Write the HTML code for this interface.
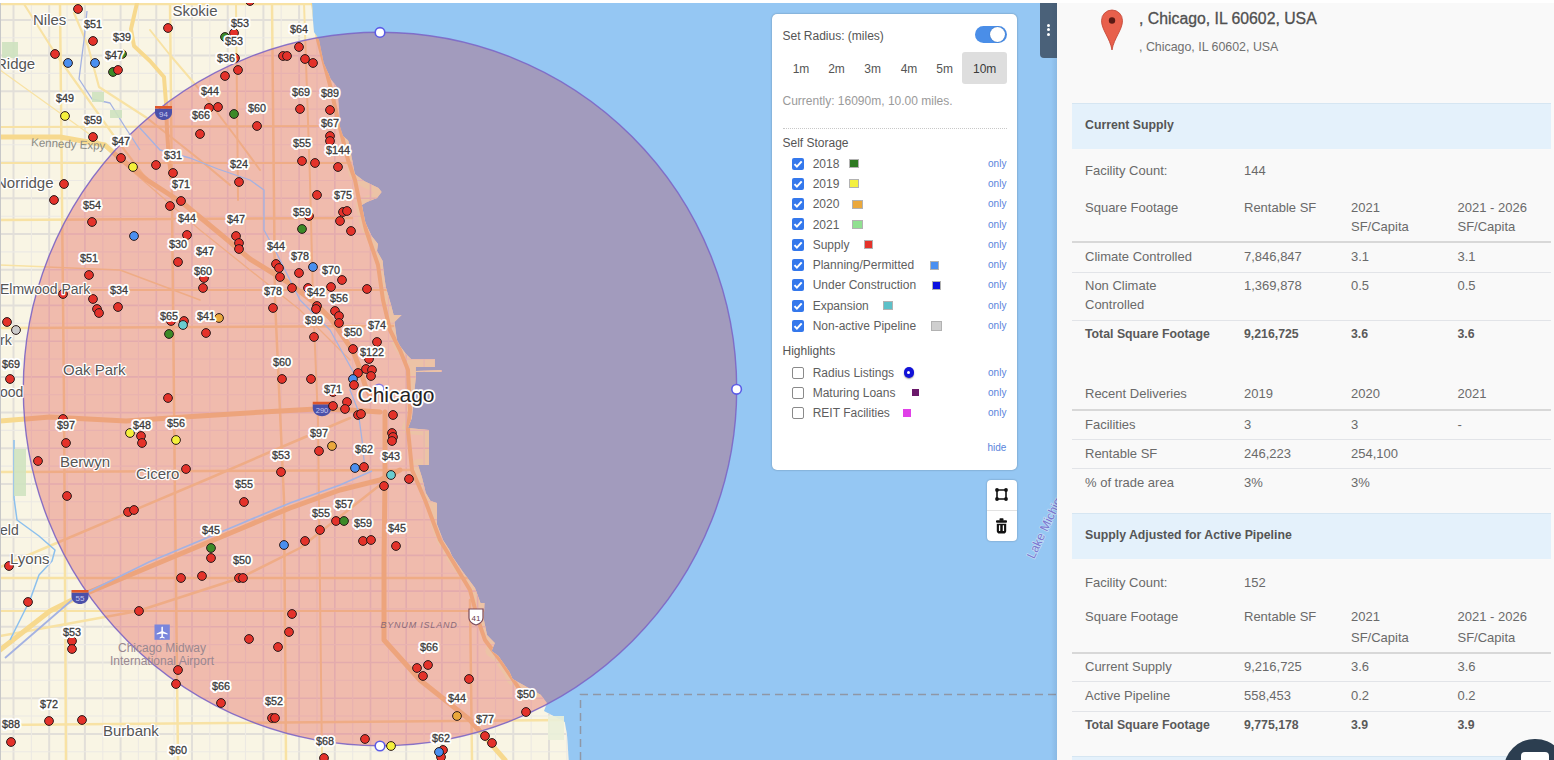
<!DOCTYPE html>
<html><head><meta charset="utf-8"><style>
html,body{margin:0;padding:0;background:#fff;width:1554px;height:760px;overflow:hidden;position:relative;font-family:"Liberation Sans", sans-serif}
.t{position:absolute;white-space:nowrap;font-family:"Liberation Sans", sans-serif}
svg text{font-family:"Liberation Sans", sans-serif}
</style></head><body>
<svg width="1057" height="757" viewBox="0 3 1057 757" style="position:absolute;left:0;top:3">
<defs><clipPath id="land"><polygon points="312,3 312.6,16 314,32 319,40 323.7,63 330.8,79 337,87 338.7,103 339.7,119 339.7,126 343,136 347.6,140 348.4,141 351.6,157 354.8,174 364,181 378.5,188 381.6,192 377,198 367,202 361.9,205 365,221 366,224 371.6,236 378,244 377,251 382.7,261 383.4,270 385.8,287 390.5,303 393.7,315 401.6,315 394.5,322 396.9,340 400,346 406,354 411,359 415.8,359 434.8,359 434.8,367 415.8,367 415.8,371 441.9,370 441.9,372 415.8,372 415.8,378 414,394 411.9,418 408.7,426 408,428 429,430 429,465 418,465 421.9,477 425.8,493 430.6,501 436.9,503 436.9,524 443,540 449.5,550 452,556 463,572 475,588 480.5,603 484.5,603 483.7,619 487,635 494.8,643 491.6,651 498.4,656 509.5,672 512.6,679 541,695 547,703 544,711 564.8,722 567,735 568.7,760 0,760 0,3"/></clipPath>
<clipPath id="circ"><circle cx="380" cy="389" r="356.7"/></clipPath>
<clipPath id="outc"><path clip-rule="evenodd" d="M0 0H1057V760H0Z M23.3 389 a356.7 356.7 0 1 0 713.4 0 a356.7 356.7 0 1 0 -713.4 0Z"/></clipPath></defs>
<rect x="0" y="0" width="1057" height="760" fill="#95c7f3"/>
<g clip-path="url(#outc)">
<polygon points="312,3 312.6,16 314,32 319,40 323.7,63 330.8,79 337,87 338.7,103 339.7,119 339.7,126 343,136 347.6,140 348.4,141 351.6,157 354.8,174 364,181 378.5,188 381.6,192 377,198 367,202 361.9,205 365,221 366,224 371.6,236 378,244 377,251 382.7,261 383.4,270 385.8,287 390.5,303 393.7,315 401.6,315 394.5,322 396.9,340 400,346 406,354 411,359 415.8,359 434.8,359 434.8,367 415.8,367 415.8,371 441.9,370 441.9,372 415.8,372 415.8,378 414,394 411.9,418 408.7,426 408,428 429,430 429,465 418,465 421.9,477 425.8,493 430.6,501 436.9,503 436.9,524 443,540 449.5,550 452,556 463,572 475,588 480.5,603 484.5,603 483.7,619 487,635 494.8,643 491.6,651 498.4,656 509.5,672 512.6,679 541,695 547,703 544,711 564.8,722 567,735 568.7,760 0,760 0,3" fill="#f9f5e4"/>
<g clip-path="url(#land)">
<path d="M13.5 3V760M49.2 3V760M84.9 3V760M120.6 3V760M156.3 3V760M192.0 3V760M227.7 3V760M263.4 3V760M299.1 3V760M334.8 3V760M370.5 3V760M406.2 3V760M441.9 3V760M477.6 3V760M513.3 3V760M549.0 3V760M584.7 3V760M0 19.9H600M0 55.6H600M0 91.2H600M0 126.9H600M0 162.6H600M0 198.3H600M0 234.0H600M0 269.7H600M0 305.4H600M0 341.2H600M0 376.9H600M0 412.6H600M0 448.3H600M0 484.0H600M0 519.7H600M0 555.4H600M0 591.1H600M0 626.8H600M0 662.5H600M0 698.2H600M0 733.9H600" stroke="#e2dfd9" stroke-width="2" fill="none"/><path d="M31.4 3V760M67.1 3V760M102.8 3V760M138.4 3V760M174.1 3V760M209.8 3V760M245.5 3V760M281.2 3V760M317.0 3V760M352.7 3V760M388.4 3V760M424.1 3V760M459.8 3V760M495.5 3V760M531.2 3V760M566.9 3V760M0 37.7H600M0 73.4H600M0 109.1H600M0 144.8H600M0 180.5H600M0 216.2H600M0 251.9H600M0 287.6H600M0 323.3H600M0 359.0H600M0 394.7H600M0 430.4H600M0 466.1H600M0 501.8H600M0 537.5H600M0 573.2H600M0 608.9H600M0 644.6H600M0 680.3H600M0 716.0H600M0 751.7H600" stroke="#ece9e3" stroke-width="1.1" fill="none"/>
<polyline points="60,3 62,200 64,400 66,760" fill="none" stroke="#f8e2a4" stroke-width="2.5" stroke-linejoin="round" stroke-linecap="round"/>
<polyline points="170,3 172,200 175,500 178,760" fill="none" stroke="#f8e2a4" stroke-width="2.5" stroke-linejoin="round" stroke-linecap="round"/>
<polyline points="272,3 275,300 284,500 286,760" fill="none" stroke="#f8e2a4" stroke-width="2.5" stroke-linejoin="round" stroke-linecap="round"/>
<polyline points="304,3 310,180 313,300 318,420 322,760" fill="none" stroke="#f8e2a4" stroke-width="2" stroke-linejoin="round" stroke-linecap="round"/>
<polyline points="470,600 472,760" fill="none" stroke="#f8e2a4" stroke-width="2.5" stroke-linejoin="round" stroke-linecap="round"/>
<polyline points="236,3 238,200" fill="none" stroke="#f8e2a4" stroke-width="2" stroke-linejoin="round" stroke-linecap="round"/>
<polyline points="0,4 312,4" fill="none" stroke="#f8e2a4" stroke-width="2.5" stroke-linejoin="round" stroke-linecap="round"/>
<polyline points="0,220 352,218" fill="none" stroke="#f8e2a4" stroke-width="2.5" stroke-linejoin="round" stroke-linecap="round"/>
<polyline points="0,127 340,126" fill="none" stroke="#f8e2a4" stroke-width="2.2" stroke-linejoin="round" stroke-linecap="round"/>
<polyline points="0,163 348,163" fill="none" stroke="#f8e2a4" stroke-width="2.2" stroke-linejoin="round" stroke-linecap="round"/>
<polyline points="0,328 393,326" fill="none" stroke="#f8e2a4" stroke-width="2.5" stroke-linejoin="round" stroke-linecap="round"/>
<polyline points="0,472 410,470" fill="none" stroke="#f8e2a4" stroke-width="2.5" stroke-linejoin="round" stroke-linecap="round"/>
<polyline points="0,578 470,578" fill="none" stroke="#f8e2a4" stroke-width="2.5" stroke-linejoin="round" stroke-linecap="round"/>
<polyline points="0,611 490,611" fill="none" stroke="#f8e2a4" stroke-width="2" stroke-linejoin="round" stroke-linecap="round"/>
<polyline points="0,725 570,720" fill="none" stroke="#f8e2a4" stroke-width="2.5" stroke-linejoin="round" stroke-linecap="round"/>
<polyline points="0,290 390,290" fill="none" stroke="#f8e2a4" stroke-width="1.8" stroke-linejoin="round" stroke-linecap="round"/>
<polyline points="0,567 59,542 210,478 284,446 350,418" fill="none" stroke="#f8e2a4" stroke-width="2.5" stroke-linejoin="round" stroke-linecap="round"/>
<polyline points="0,636 138,611 240,578 300,548 380,485" fill="none" stroke="#f8e2a4" stroke-width="2.5" stroke-linejoin="round" stroke-linecap="round"/>
<polyline points="0,265 120,270 200,300" fill="none" stroke="#f8e2a4" stroke-width="1.5" stroke-linejoin="round" stroke-linecap="round"/>
<polyline points="0,70 92,136 200,230 300,310 350,360" fill="none" stroke="#f8e2a4" stroke-width="1.3" stroke-linejoin="round" stroke-linecap="round"/>
<polyline points="24,4 55,53 85,95 114,136 147,180" fill="none" stroke="#f8e2a4" stroke-width="2.2" stroke-linejoin="round" stroke-linecap="round"/>
<polyline points="74,13 88,46 99,87 147,118 200,160 230,185" fill="none" stroke="#f8e2a4" stroke-width="2.2" stroke-linejoin="round" stroke-linecap="round"/>
<polyline points="150,30 170,55 200,90 235,136 260,170" fill="none" stroke="#f8e2a4" stroke-width="2" stroke-linejoin="round" stroke-linecap="round"/>
<polyline points="0,137 60,137 105,145 116,155 147,180 184,204 224,237 250,259 289,283 316,304 331,319 342,335 353,351 360,369 365,385 372,400" fill="none" stroke="#f7d98e" stroke-width="5" stroke-linejoin="round" stroke-linecap="round"/>
<polyline points="137,3 131,29 134,46 150,61 164,77 166,103 167,130 169,160 172,182" fill="none" stroke="#f7d98e" stroke-width="4" stroke-linejoin="round" stroke-linecap="round"/>
<polyline points="0,421 50,417 126,421 184,417 263,412 316,409 350,410 380,412" fill="none" stroke="#f7d98e" stroke-width="5" stroke-linejoin="round" stroke-linecap="round"/>
<polyline points="0,650 50,611 80,596 149,567 240,529 290,508 340,490 380,480 400,470" fill="none" stroke="#f7d98e" stroke-width="5" stroke-linejoin="round" stroke-linecap="round"/>
<polyline points="385,412 385,480 384,560 384,640 420,680 470,720 505,760" fill="none" stroke="#f7d98e" stroke-width="5" stroke-linejoin="round" stroke-linecap="round"/>
<polyline points="313,3 318,40 330,85 338,120 348,160 355,180 360,205 366,230 378,265 383,300 390,330 400,350 408,370 410,410 408,430 412,470 425,500 440,540 470,590 478,620 485,640 500,660 520,690" fill="none" stroke="#f7d98e" stroke-width="4" stroke-linejoin="round" stroke-linecap="round"/>
</g>
</g>
<g clip-path="url(#circ)">
<rect x="0" y="0" width="1057" height="760" fill="#a29bbd"/>
<polygon points="312,3 312.6,16 314,32 319,40 323.7,63 330.8,79 337,87 338.7,103 339.7,119 339.7,126 343,136 347.6,140 348.4,141 351.6,157 354.8,174 364,181 378.5,188 381.6,192 377,198 367,202 361.9,205 365,221 366,224 371.6,236 378,244 377,251 382.7,261 383.4,270 385.8,287 390.5,303 393.7,315 401.6,315 394.5,322 396.9,340 400,346 406,354 411,359 415.8,359 434.8,359 434.8,367 415.8,367 415.8,371 441.9,370 441.9,372 415.8,372 415.8,378 414,394 411.9,418 408.7,426 408,428 429,430 429,465 418,465 421.9,477 425.8,493 430.6,501 436.9,503 436.9,524 443,540 449.5,550 452,556 463,572 475,588 480.5,603 484.5,603 483.7,619 487,635 494.8,643 491.6,651 498.4,656 509.5,672 512.6,679 541,695 547,703 544,711 564.8,722 567,735 568.7,760 0,760 0,3" fill="#f0bbad"/>
<g clip-path="url(#land)">
<polyline points="343,136 347.6,140 348.4,141 351.6,157 354.8,174 364,181 378.5,188 381.6,192 377,198 367,202 361.9,205 365,221 366,224 371.6,236 378,244 377,251 382.7,261 383.4,270 385.8,287 390.5,303 393.7,315 401.6,315 394.5,322 396.9,340 400,346 406,354 411,359 415.8,359 434.8,359 434.8,367 415.8,367 415.8,371 441.9,370 441.9,372 415.8,372 415.8,378 414,394 411.9,418 408.7,426 408,428 429,430 429,465 418,465 421.9,477 425.8,493 430.6,501 436.9,503 436.9,524 443,540 449.5,550 452,556 463,572 475,588 480.5,603 484.5,603 483.7,619 487,635 494.8,643 491.6,651 498.4,656 509.5,672 512.6,679 541,695" fill="none" stroke="#ecc3a6" stroke-width="12" stroke-linejoin="round"/>
<path d="M13.5 3V760M49.2 3V760M84.9 3V760M120.6 3V760M156.3 3V760M192.0 3V760M227.7 3V760M263.4 3V760M299.1 3V760M334.8 3V760M370.5 3V760M406.2 3V760M441.9 3V760M477.6 3V760M513.3 3V760M549.0 3V760M584.7 3V760M0 19.9H600M0 55.6H600M0 91.2H600M0 126.9H600M0 162.6H600M0 198.3H600M0 234.0H600M0 269.7H600M0 305.4H600M0 341.2H600M0 376.9H600M0 412.6H600M0 448.3H600M0 484.0H600M0 519.7H600M0 555.4H600M0 591.1H600M0 626.8H600M0 662.5H600M0 698.2H600M0 733.9H600" stroke="#e3abad" stroke-width="1.6" fill="none"/><path d="M31.4 3V760M67.1 3V760M102.8 3V760M138.4 3V760M174.1 3V760M209.8 3V760M245.5 3V760M281.2 3V760M317.0 3V760M352.7 3V760M388.4 3V760M424.1 3V760M459.8 3V760M495.5 3V760M531.2 3V760M566.9 3V760M0 37.7H600M0 73.4H600M0 109.1H600M0 144.8H600M0 180.5H600M0 216.2H600M0 251.9H600M0 287.6H600M0 323.3H600M0 359.0H600M0 394.7H600M0 430.4H600M0 466.1H600M0 501.8H600M0 537.5H600M0 573.2H600M0 608.9H600M0 644.6H600M0 680.3H600M0 716.0H600M0 751.7H600" stroke="#e8b2b0" stroke-width="1.1" fill="none"/>
<polyline points="60,3 62,200 64,400 66,760" fill="none" stroke="#efac86" stroke-width="2.5" stroke-linejoin="round" stroke-linecap="round"/>
<polyline points="170,3 172,200 175,500 178,760" fill="none" stroke="#efac86" stroke-width="2.5" stroke-linejoin="round" stroke-linecap="round"/>
<polyline points="272,3 275,300 284,500 286,760" fill="none" stroke="#efac86" stroke-width="2.5" stroke-linejoin="round" stroke-linecap="round"/>
<polyline points="304,3 310,180 313,300 318,420 322,760" fill="none" stroke="#efac86" stroke-width="2" stroke-linejoin="round" stroke-linecap="round"/>
<polyline points="470,600 472,760" fill="none" stroke="#efac86" stroke-width="2.5" stroke-linejoin="round" stroke-linecap="round"/>
<polyline points="236,3 238,200" fill="none" stroke="#efac86" stroke-width="2" stroke-linejoin="round" stroke-linecap="round"/>
<polyline points="0,4 312,4" fill="none" stroke="#efac86" stroke-width="2.5" stroke-linejoin="round" stroke-linecap="round"/>
<polyline points="0,220 352,218" fill="none" stroke="#efac86" stroke-width="2.5" stroke-linejoin="round" stroke-linecap="round"/>
<polyline points="0,127 340,126" fill="none" stroke="#efac86" stroke-width="2.2" stroke-linejoin="round" stroke-linecap="round"/>
<polyline points="0,163 348,163" fill="none" stroke="#efac86" stroke-width="2.2" stroke-linejoin="round" stroke-linecap="round"/>
<polyline points="0,328 393,326" fill="none" stroke="#efac86" stroke-width="2.5" stroke-linejoin="round" stroke-linecap="round"/>
<polyline points="0,472 410,470" fill="none" stroke="#efac86" stroke-width="2.5" stroke-linejoin="round" stroke-linecap="round"/>
<polyline points="0,578 470,578" fill="none" stroke="#efac86" stroke-width="2.5" stroke-linejoin="round" stroke-linecap="round"/>
<polyline points="0,611 490,611" fill="none" stroke="#efac86" stroke-width="2" stroke-linejoin="round" stroke-linecap="round"/>
<polyline points="0,725 570,720" fill="none" stroke="#efac86" stroke-width="2.5" stroke-linejoin="round" stroke-linecap="round"/>
<polyline points="0,290 390,290" fill="none" stroke="#efac86" stroke-width="1.8" stroke-linejoin="round" stroke-linecap="round"/>
<polyline points="0,567 59,542 210,478 284,446 350,418" fill="none" stroke="#efac86" stroke-width="2.5" stroke-linejoin="round" stroke-linecap="round"/>
<polyline points="0,636 138,611 240,578 300,548 380,485" fill="none" stroke="#efac86" stroke-width="2.5" stroke-linejoin="round" stroke-linecap="round"/>
<polyline points="0,265 120,270 200,300" fill="none" stroke="#efac86" stroke-width="1.5" stroke-linejoin="round" stroke-linecap="round"/>
<polyline points="0,70 92,136 200,230 300,310 350,360" fill="none" stroke="#efac86" stroke-width="1.3" stroke-linejoin="round" stroke-linecap="round"/>
<polyline points="24,4 55,53 85,95 114,136 147,180" fill="none" stroke="#efac86" stroke-width="2.2" stroke-linejoin="round" stroke-linecap="round"/>
<polyline points="74,13 88,46 99,87 147,118 200,160 230,185" fill="none" stroke="#efac86" stroke-width="2.2" stroke-linejoin="round" stroke-linecap="round"/>
<polyline points="150,30 170,55 200,90 235,136 260,170" fill="none" stroke="#efac86" stroke-width="2" stroke-linejoin="round" stroke-linecap="round"/>
<polyline points="0,137 60,137 105,145 116,155 147,180 184,204 224,237 250,259 289,283 316,304 331,319 342,335 353,351 360,369 365,385 372,400" fill="none" stroke="#eda47c" stroke-width="5" stroke-linejoin="round" stroke-linecap="round"/>
<polyline points="137,3 131,29 134,46 150,61 164,77 166,103 167,130 169,160 172,182" fill="none" stroke="#eda47c" stroke-width="4" stroke-linejoin="round" stroke-linecap="round"/>
<polyline points="0,421 50,417 126,421 184,417 263,412 316,409 350,410 380,412" fill="none" stroke="#eda47c" stroke-width="5" stroke-linejoin="round" stroke-linecap="round"/>
<polyline points="0,650 50,611 80,596 149,567 240,529 290,508 340,490 380,480 400,470" fill="none" stroke="#eda47c" stroke-width="5" stroke-linejoin="round" stroke-linecap="round"/>
<polyline points="385,412 385,480 384,560 384,640 420,680 470,720 505,760" fill="none" stroke="#eda47c" stroke-width="5" stroke-linejoin="round" stroke-linecap="round"/>
<polyline points="313,3 318,40 330,85 338,120 348,160 355,180 360,205 366,230 378,265 383,300 390,330 400,350 408,370 410,410 408,430 412,470 425,500 440,540 470,590 478,620 485,640 500,660 520,690" fill="none" stroke="#eda47c" stroke-width="4" stroke-linejoin="round" stroke-linecap="round"/>
</g>
</g>
<circle cx="380" cy="389" r="356.7" fill="none" stroke="#7a62c4" stroke-opacity="0.85" stroke-width="1.4"/>
<path d="M580.5 760V694.5H1057" fill="none" stroke="#8f97a6" stroke-width="1.5" stroke-dasharray="8,5"/>
<g fill="none" stroke="#a4b2e2" stroke-width="1.3" stroke-linejoin="round">
<polyline points="5,658 72,600 149,562 240,524 290,503 340,485 372,471" stroke-width="1.8"/>
<polyline points="14,440 14,498 17,520 39,536 55,550 52,561 39,575 30,600 10,640" stroke="#8cc0ee" stroke-width="1.5"/>
<polyline points="355,375 350,390 358,410 362,440 365,470"/>
<polyline points="355,375 330,330 300,300 275,250 264,230 264,190 250,180 218,169 190,158 160,150 139,127"/>
<polyline points="87,11 84,40 79,79 92,99 110,103 125,127 140,150"/>
</g>
<g fill="#cfe3c0" opacity="0.9"><rect x="2" y="42" width="16" height="16"/><rect x="92" y="92" width="12" height="10"/><rect x="110" y="110" width="12" height="8"/><rect x="14" y="449" width="12" height="47"/><rect x="548" y="716" width="16" height="24" fill="#eaf0d8"/></g>
<g><path d="M155 108.5H172V112.5C172 117.5 167.24 120 163.5 120C159.76 120 155 117.5 155 112.5Z" fill="#4b50a8"/><rect x="155" y="106" width="17" height="2.6" fill="#e0582a"/><text x="163.5" y="117.2" font-size="8" fill="#c8c8f0" text-anchor="middle" font-family="Liberation Sans">94</text></g>
<g><path d="M312.75 404.25H331.25V408.25C331.25 413.25 326.07 416.25 322 416.25C317.93 416.25 312.75 413.25 312.75 408.25Z" fill="#4b50a8"/><rect x="312.75" y="401.75" width="18.5" height="2.6" fill="#e0582a"/><text x="322" y="413.2" font-size="7.5" fill="#c8c8f0" text-anchor="middle" font-family="Liberation Sans">290</text></g>
<g><path d="M71.5 592.5H88.5V596.5C88.5 601.5 83.74 604 80 604C76.26 604 71.5 601.5 71.5 596.5Z" fill="#4b50a8"/><rect x="71.5" y="590" width="17" height="2.6" fill="#e0582a"/><text x="80" y="601.2" font-size="8" fill="#c8c8f0" text-anchor="middle" font-family="Liberation Sans">55</text></g>
<g><path d="M469 609H483V618C483 622 479 624 476 625C473 624 469 622 469 618Z" fill="#fff" stroke="#7a4a5a" stroke-width="1.2"/><text x="476" y="620.5" font-size="8" fill="#6a3a4a" text-anchor="middle" font-family="Liberation Sans">41</text></g>
<g><rect x="154.5" y="624.5" width="15.3" height="15.3" fill="#7a86dc"/><path d="M161.4 627.2Q162.15 626 162.9 627.2V631.2L167.6 633.4V634.6L162.9 633.6V636.4L164.6 637.6V638.4L162.15 637.8L159.7 638.4V637.6L161.4 636.4V633.6L156.7 634.6V633.4L161.4 631.2Z" fill="#fff"/></g>
<circle cx="78" cy="9" r="4.4" fill="#e4322a" stroke="#2a1a1a" stroke-width="1"/>
<circle cx="168" cy="28" r="4.4" fill="#e4322a" stroke="#2a1a1a" stroke-width="1"/>
<circle cx="225" cy="37" r="4.4" fill="#3c8a28" stroke="#2a1a1a" stroke-width="1"/>
<circle cx="234" cy="33" r="4.4" fill="#e4322a" stroke="#2a1a1a" stroke-width="1"/>
<circle cx="93" cy="41" r="4.4" fill="#e4322a" stroke="#2a1a1a" stroke-width="1"/>
<circle cx="55" cy="54" r="4.4" fill="#e4322a" stroke="#2a1a1a" stroke-width="1"/>
<circle cx="68" cy="63" r="4.4" fill="#4a8ff0" stroke="#2a1a1a" stroke-width="1"/>
<circle cx="95" cy="63" r="4.4" fill="#4a8ff0" stroke="#2a1a1a" stroke-width="1"/>
<circle cx="122" cy="54" r="4.4" fill="#3c8a28" stroke="#2a1a1a" stroke-width="1"/>
<circle cx="113" cy="72" r="4.4" fill="#3c8a28" stroke="#2a1a1a" stroke-width="1"/>
<circle cx="118" cy="70" r="4.4" fill="#e4322a" stroke="#2a1a1a" stroke-width="1"/>
<circle cx="235" cy="58" r="4.4" fill="#e4322a" stroke="#2a1a1a" stroke-width="1"/>
<circle cx="238" cy="70" r="4.4" fill="#e4322a" stroke="#2a1a1a" stroke-width="1"/>
<circle cx="225" cy="76" r="4.4" fill="#e4322a" stroke="#2a1a1a" stroke-width="1"/>
<circle cx="299" cy="47" r="4.4" fill="#e4322a" stroke="#2a1a1a" stroke-width="1"/>
<circle cx="283" cy="56" r="4.4" fill="#e4322a" stroke="#2a1a1a" stroke-width="1"/>
<circle cx="287" cy="56" r="4.4" fill="#e4322a" stroke="#2a1a1a" stroke-width="1"/>
<circle cx="305" cy="59" r="4.4" fill="#e4322a" stroke="#2a1a1a" stroke-width="1"/>
<circle cx="313" cy="63" r="4.4" fill="#e4322a" stroke="#2a1a1a" stroke-width="1"/>
<circle cx="209" cy="108" r="4.4" fill="#e4322a" stroke="#2a1a1a" stroke-width="1"/>
<circle cx="218" cy="107" r="4.4" fill="#e4322a" stroke="#2a1a1a" stroke-width="1"/>
<circle cx="234" cy="114" r="4.4" fill="#3c8a28" stroke="#2a1a1a" stroke-width="1"/>
<circle cx="257" cy="126" r="4.4" fill="#e4322a" stroke="#2a1a1a" stroke-width="1"/>
<circle cx="200" cy="134" r="4.4" fill="#e4322a" stroke="#2a1a1a" stroke-width="1"/>
<circle cx="300" cy="109" r="4.4" fill="#e4322a" stroke="#2a1a1a" stroke-width="1"/>
<circle cx="330" cy="110" r="4.4" fill="#e4322a" stroke="#2a1a1a" stroke-width="1"/>
<circle cx="330" cy="136" r="4.4" fill="#e4322a" stroke="#2a1a1a" stroke-width="1"/>
<circle cx="330" cy="141" r="4.4" fill="#e4322a" stroke="#2a1a1a" stroke-width="1"/>
<circle cx="65" cy="116" r="4.4" fill="#f4f03c" stroke="#2a1a1a" stroke-width="1"/>
<circle cx="93" cy="137" r="4.4" fill="#e4322a" stroke="#2a1a1a" stroke-width="1"/>
<circle cx="121" cy="158" r="4.4" fill="#e4322a" stroke="#2a1a1a" stroke-width="1"/>
<circle cx="133" cy="167" r="4.4" fill="#f4f03c" stroke="#2a1a1a" stroke-width="1"/>
<circle cx="156" cy="165" r="4.4" fill="#e4322a" stroke="#2a1a1a" stroke-width="1"/>
<circle cx="173" cy="173" r="4.4" fill="#e4322a" stroke="#2a1a1a" stroke-width="1"/>
<circle cx="239" cy="182" r="4.4" fill="#e4322a" stroke="#2a1a1a" stroke-width="1"/>
<circle cx="302" cy="161" r="4.4" fill="#e4322a" stroke="#2a1a1a" stroke-width="1"/>
<circle cx="315" cy="163" r="4.4" fill="#e4322a" stroke="#2a1a1a" stroke-width="1"/>
<circle cx="338" cy="167" r="4.4" fill="#e4322a" stroke="#2a1a1a" stroke-width="1"/>
<circle cx="317" cy="195" r="4.4" fill="#e4322a" stroke="#2a1a1a" stroke-width="1"/>
<circle cx="64" cy="184" r="4.4" fill="#e4322a" stroke="#2a1a1a" stroke-width="1"/>
<circle cx="54" cy="200" r="4.4" fill="#e4322a" stroke="#2a1a1a" stroke-width="1"/>
<circle cx="181" cy="201" r="4.4" fill="#e4322a" stroke="#2a1a1a" stroke-width="1"/>
<circle cx="170" cy="206" r="4.4" fill="#e4322a" stroke="#2a1a1a" stroke-width="1"/>
<circle cx="250" cy="1" r="4.4" fill="#e4322a" stroke="#2a1a1a" stroke-width="1"/>
<circle cx="92" cy="222" r="4.4" fill="#e4322a" stroke="#2a1a1a" stroke-width="1"/>
<circle cx="134" cy="236" r="4.4" fill="#4a8ff0" stroke="#2a1a1a" stroke-width="1"/>
<circle cx="187" cy="235" r="4.4" fill="#e4322a" stroke="#2a1a1a" stroke-width="1"/>
<circle cx="236" cy="236" r="4.4" fill="#e4322a" stroke="#2a1a1a" stroke-width="1"/>
<circle cx="239" cy="243" r="4.4" fill="#e4322a" stroke="#2a1a1a" stroke-width="1"/>
<circle cx="239" cy="249" r="4.4" fill="#e4322a" stroke="#2a1a1a" stroke-width="1"/>
<circle cx="309" cy="216" r="4.4" fill="#e4322a" stroke="#2a1a1a" stroke-width="1"/>
<circle cx="302" cy="229" r="4.4" fill="#3c8a28" stroke="#2a1a1a" stroke-width="1"/>
<circle cx="343" cy="212" r="4.4" fill="#e4322a" stroke="#2a1a1a" stroke-width="1"/>
<circle cx="347" cy="211" r="4.4" fill="#e4322a" stroke="#2a1a1a" stroke-width="1"/>
<circle cx="340" cy="221" r="4.4" fill="#e4322a" stroke="#2a1a1a" stroke-width="1"/>
<circle cx="351" cy="231" r="4.4" fill="#e4322a" stroke="#2a1a1a" stroke-width="1"/>
<circle cx="89" cy="275" r="4.4" fill="#e4322a" stroke="#2a1a1a" stroke-width="1"/>
<circle cx="178" cy="262" r="4.4" fill="#e4322a" stroke="#2a1a1a" stroke-width="1"/>
<circle cx="204" cy="278" r="4.4" fill="#e4322a" stroke="#2a1a1a" stroke-width="1"/>
<circle cx="203" cy="288" r="4.4" fill="#e4322a" stroke="#2a1a1a" stroke-width="1"/>
<circle cx="276" cy="264" r="4.4" fill="#e4322a" stroke="#2a1a1a" stroke-width="1"/>
<circle cx="279" cy="268" r="4.4" fill="#e4322a" stroke="#2a1a1a" stroke-width="1"/>
<circle cx="280" cy="277" r="4.4" fill="#e4322a" stroke="#2a1a1a" stroke-width="1"/>
<circle cx="299" cy="273" r="4.4" fill="#e4322a" stroke="#2a1a1a" stroke-width="1"/>
<circle cx="313" cy="267" r="4.4" fill="#4a8ff0" stroke="#2a1a1a" stroke-width="1"/>
<circle cx="342" cy="280" r="4.4" fill="#e4322a" stroke="#2a1a1a" stroke-width="1"/>
<circle cx="292" cy="288" r="4.4" fill="#e4322a" stroke="#2a1a1a" stroke-width="1"/>
<circle cx="308" cy="288" r="4.4" fill="#e4322a" stroke="#2a1a1a" stroke-width="1"/>
<circle cx="331" cy="287" r="4.4" fill="#e4322a" stroke="#2a1a1a" stroke-width="1"/>
<circle cx="367" cy="289" r="4.4" fill="#e4322a" stroke="#2a1a1a" stroke-width="1"/>
<circle cx="63" cy="294" r="4.4" fill="#e4322a" stroke="#2a1a1a" stroke-width="1"/>
<circle cx="93" cy="299" r="4.4" fill="#e4322a" stroke="#2a1a1a" stroke-width="1"/>
<circle cx="97" cy="309" r="4.4" fill="#e4322a" stroke="#2a1a1a" stroke-width="1"/>
<circle cx="99" cy="313" r="4.4" fill="#e4322a" stroke="#2a1a1a" stroke-width="1"/>
<circle cx="118" cy="307" r="4.4" fill="#e4322a" stroke="#2a1a1a" stroke-width="1"/>
<circle cx="171" cy="321" r="4.4" fill="#e4322a" stroke="#2a1a1a" stroke-width="1"/>
<circle cx="184" cy="321" r="4.4" fill="#e4322a" stroke="#2a1a1a" stroke-width="1"/>
<circle cx="183" cy="325" r="4.4" fill="#68ccd0" stroke="#2a1a1a" stroke-width="1"/>
<circle cx="169" cy="334" r="4.4" fill="#3c8a28" stroke="#2a1a1a" stroke-width="1"/>
<circle cx="219" cy="318" r="4.4" fill="#eaa83c" stroke="#2a1a1a" stroke-width="1"/>
<circle cx="206" cy="333" r="4.4" fill="#e4322a" stroke="#2a1a1a" stroke-width="1"/>
<circle cx="273" cy="308" r="4.4" fill="#e4322a" stroke="#2a1a1a" stroke-width="1"/>
<circle cx="317" cy="306" r="4.4" fill="#e4322a" stroke="#2a1a1a" stroke-width="1"/>
<circle cx="316" cy="309" r="4.4" fill="#e4322a" stroke="#2a1a1a" stroke-width="1"/>
<circle cx="335" cy="311" r="4.4" fill="#e4322a" stroke="#2a1a1a" stroke-width="1"/>
<circle cx="339" cy="316" r="4.4" fill="#e4322a" stroke="#2a1a1a" stroke-width="1"/>
<circle cx="339" cy="323" r="4.4" fill="#e4322a" stroke="#2a1a1a" stroke-width="1"/>
<circle cx="314" cy="337" r="4.4" fill="#e4322a" stroke="#2a1a1a" stroke-width="1"/>
<circle cx="353" cy="349" r="4.4" fill="#e4322a" stroke="#2a1a1a" stroke-width="1"/>
<circle cx="377" cy="342" r="4.4" fill="#e4322a" stroke="#2a1a1a" stroke-width="1"/>
<circle cx="369" cy="359" r="4.4" fill="#e4322a" stroke="#2a1a1a" stroke-width="1"/>
<circle cx="358" cy="373" r="4.4" fill="#e4322a" stroke="#2a1a1a" stroke-width="1"/>
<circle cx="366" cy="369" r="4.4" fill="#e4322a" stroke="#2a1a1a" stroke-width="1"/>
<circle cx="372" cy="370" r="4.4" fill="#e4322a" stroke="#2a1a1a" stroke-width="1"/>
<circle cx="371" cy="376" r="4.4" fill="#e4322a" stroke="#2a1a1a" stroke-width="1"/>
<circle cx="353" cy="379" r="4.4" fill="#4a8ff0" stroke="#2a1a1a" stroke-width="1"/>
<circle cx="282" cy="379" r="4.4" fill="#e4322a" stroke="#2a1a1a" stroke-width="1"/>
<circle cx="311" cy="379" r="4.4" fill="#e4322a" stroke="#2a1a1a" stroke-width="1"/>
<circle cx="7" cy="322" r="4.4" fill="#e4322a" stroke="#2a1a1a" stroke-width="1"/>
<circle cx="16" cy="330" r="4.4" fill="#cccccc" stroke="#2a1a1a" stroke-width="1"/>
<circle cx="10" cy="379" r="4.4" fill="#e4322a" stroke="#2a1a1a" stroke-width="1"/>
<circle cx="354" cy="385" r="4.4" fill="#e4322a" stroke="#2a1a1a" stroke-width="1"/>
<circle cx="168" cy="398" r="4.4" fill="#e4322a" stroke="#2a1a1a" stroke-width="1"/>
<circle cx="63" cy="419" r="4.4" fill="#e4322a" stroke="#2a1a1a" stroke-width="1"/>
<circle cx="66" cy="443" r="4.4" fill="#e4322a" stroke="#2a1a1a" stroke-width="1"/>
<circle cx="130" cy="433" r="4.4" fill="#f4f03c" stroke="#2a1a1a" stroke-width="1"/>
<circle cx="141" cy="436" r="4.4" fill="#e4322a" stroke="#2a1a1a" stroke-width="1"/>
<circle cx="142" cy="443" r="4.4" fill="#e4322a" stroke="#2a1a1a" stroke-width="1"/>
<circle cx="176" cy="440" r="4.4" fill="#f4f03c" stroke="#2a1a1a" stroke-width="1"/>
<circle cx="38" cy="461" r="4.4" fill="#e4322a" stroke="#2a1a1a" stroke-width="1"/>
<circle cx="186" cy="469" r="4.4" fill="#e4322a" stroke="#2a1a1a" stroke-width="1"/>
<circle cx="333" cy="406" r="4.4" fill="#e4322a" stroke="#2a1a1a" stroke-width="1"/>
<circle cx="347" cy="402" r="4.4" fill="#e4322a" stroke="#2a1a1a" stroke-width="1"/>
<circle cx="345" cy="409" r="4.4" fill="#e4322a" stroke="#2a1a1a" stroke-width="1"/>
<circle cx="333" cy="392" r="4.4" fill="#e4322a" stroke="#2a1a1a" stroke-width="1"/>
<circle cx="358" cy="415" r="4.4" fill="#e4322a" stroke="#2a1a1a" stroke-width="1"/>
<circle cx="361" cy="414" r="4.4" fill="#e4322a" stroke="#2a1a1a" stroke-width="1"/>
<circle cx="393" cy="415" r="4.4" fill="#e4322a" stroke="#2a1a1a" stroke-width="1"/>
<circle cx="392" cy="433" r="4.4" fill="#e4322a" stroke="#2a1a1a" stroke-width="1"/>
<circle cx="393" cy="437" r="4.4" fill="#e4322a" stroke="#2a1a1a" stroke-width="1"/>
<circle cx="392" cy="441" r="4.4" fill="#e4322a" stroke="#2a1a1a" stroke-width="1"/>
<circle cx="319" cy="451" r="4.4" fill="#e4322a" stroke="#2a1a1a" stroke-width="1"/>
<circle cx="332" cy="446" r="4.4" fill="#eaa83c" stroke="#2a1a1a" stroke-width="1"/>
<circle cx="281" cy="472" r="4.4" fill="#e4322a" stroke="#2a1a1a" stroke-width="1"/>
<circle cx="355" cy="468" r="4.4" fill="#4a8ff0" stroke="#2a1a1a" stroke-width="1"/>
<circle cx="364" cy="467" r="4.4" fill="#e4322a" stroke="#2a1a1a" stroke-width="1"/>
<circle cx="391" cy="475" r="4.4" fill="#68ccd0" stroke="#2a1a1a" stroke-width="1"/>
<circle cx="409" cy="479" r="4.4" fill="#e4322a" stroke="#2a1a1a" stroke-width="1"/>
<circle cx="384" cy="486" r="4.4" fill="#e4322a" stroke="#2a1a1a" stroke-width="1"/>
<circle cx="67" cy="496" r="4.4" fill="#e4322a" stroke="#2a1a1a" stroke-width="1"/>
<circle cx="128" cy="512" r="4.4" fill="#e4322a" stroke="#2a1a1a" stroke-width="1"/>
<circle cx="134" cy="510" r="4.4" fill="#e4322a" stroke="#2a1a1a" stroke-width="1"/>
<circle cx="244" cy="502" r="4.4" fill="#e4322a" stroke="#2a1a1a" stroke-width="1"/>
<circle cx="336" cy="521" r="4.4" fill="#e4322a" stroke="#2a1a1a" stroke-width="1"/>
<circle cx="344" cy="521" r="4.4" fill="#3c8a28" stroke="#2a1a1a" stroke-width="1"/>
<circle cx="320" cy="530" r="4.4" fill="#e4322a" stroke="#2a1a1a" stroke-width="1"/>
<circle cx="305" cy="541" r="4.4" fill="#e4322a" stroke="#2a1a1a" stroke-width="1"/>
<circle cx="284" cy="545" r="4.4" fill="#4a8ff0" stroke="#2a1a1a" stroke-width="1"/>
<circle cx="363" cy="541" r="4.4" fill="#e4322a" stroke="#2a1a1a" stroke-width="1"/>
<circle cx="371" cy="540" r="4.4" fill="#e4322a" stroke="#2a1a1a" stroke-width="1"/>
<circle cx="396" cy="546" r="4.4" fill="#e4322a" stroke="#2a1a1a" stroke-width="1"/>
<circle cx="211" cy="548" r="4.4" fill="#3c8a28" stroke="#2a1a1a" stroke-width="1"/>
<circle cx="211" cy="558" r="4.4" fill="#e4322a" stroke="#2a1a1a" stroke-width="1"/>
<circle cx="9" cy="566" r="4.4" fill="#e4322a" stroke="#2a1a1a" stroke-width="1"/>
<circle cx="28" cy="602" r="4.4" fill="#e4322a" stroke="#2a1a1a" stroke-width="1"/>
<circle cx="181" cy="578" r="4.4" fill="#e4322a" stroke="#2a1a1a" stroke-width="1"/>
<circle cx="202" cy="576" r="4.4" fill="#e4322a" stroke="#2a1a1a" stroke-width="1"/>
<circle cx="239" cy="578" r="4.4" fill="#e4322a" stroke="#2a1a1a" stroke-width="1"/>
<circle cx="243" cy="578" r="4.4" fill="#e4322a" stroke="#2a1a1a" stroke-width="1"/>
<circle cx="139" cy="611" r="4.4" fill="#e4322a" stroke="#2a1a1a" stroke-width="1"/>
<circle cx="292" cy="614" r="4.4" fill="#e4322a" stroke="#2a1a1a" stroke-width="1"/>
<circle cx="289" cy="632" r="4.4" fill="#e4322a" stroke="#2a1a1a" stroke-width="1"/>
<circle cx="249" cy="639" r="4.4" fill="#e4322a" stroke="#2a1a1a" stroke-width="1"/>
<circle cx="278" cy="647" r="4.4" fill="#e4322a" stroke="#2a1a1a" stroke-width="1"/>
<circle cx="178" cy="670" r="4.4" fill="#e4322a" stroke="#2a1a1a" stroke-width="1"/>
<circle cx="176" cy="684" r="4.4" fill="#e4322a" stroke="#2a1a1a" stroke-width="1"/>
<circle cx="221" cy="703" r="4.4" fill="#e4322a" stroke="#2a1a1a" stroke-width="1"/>
<circle cx="272" cy="718" r="4.4" fill="#e4322a" stroke="#2a1a1a" stroke-width="1"/>
<circle cx="275" cy="718" r="4.4" fill="#e4322a" stroke="#2a1a1a" stroke-width="1"/>
<circle cx="72" cy="641" r="4.4" fill="#e4322a" stroke="#2a1a1a" stroke-width="1"/>
<circle cx="72" cy="649" r="4.4" fill="#e4322a" stroke="#2a1a1a" stroke-width="1"/>
<circle cx="49" cy="721" r="4.4" fill="#e4322a" stroke="#2a1a1a" stroke-width="1"/>
<circle cx="82" cy="720" r="4.4" fill="#e4322a" stroke="#2a1a1a" stroke-width="1"/>
<circle cx="11" cy="742" r="4.4" fill="#e4322a" stroke="#2a1a1a" stroke-width="1"/>
<circle cx="365" cy="739" r="4.4" fill="#e4322a" stroke="#2a1a1a" stroke-width="1"/>
<circle cx="391" cy="746" r="4.4" fill="#f4f03c" stroke="#2a1a1a" stroke-width="1"/>
<circle cx="324" cy="758" r="4.4" fill="#e4322a" stroke="#2a1a1a" stroke-width="1"/>
<circle cx="417" cy="668" r="4.4" fill="#e4322a" stroke="#2a1a1a" stroke-width="1"/>
<circle cx="428" cy="665" r="4.4" fill="#e4322a" stroke="#2a1a1a" stroke-width="1"/>
<circle cx="423" cy="676" r="4.4" fill="#e4322a" stroke="#2a1a1a" stroke-width="1"/>
<circle cx="469" cy="679" r="4.4" fill="#e4322a" stroke="#2a1a1a" stroke-width="1"/>
<circle cx="457" cy="716" r="4.4" fill="#eaa83c" stroke="#2a1a1a" stroke-width="1"/>
<circle cx="526" cy="712" r="4.4" fill="#e4322a" stroke="#2a1a1a" stroke-width="1"/>
<circle cx="485" cy="736" r="4.4" fill="#e4322a" stroke="#2a1a1a" stroke-width="1"/>
<circle cx="492" cy="743" r="4.4" fill="#e4322a" stroke="#2a1a1a" stroke-width="1"/>
<circle cx="443" cy="750" r="4.4" fill="#e4322a" stroke="#2a1a1a" stroke-width="1"/>
<circle cx="441" cy="757" r="4.4" fill="#e4322a" stroke="#2a1a1a" stroke-width="1"/>
<circle cx="439" cy="752" r="4.4" fill="#4a8ff0" stroke="#2a1a1a" stroke-width="1"/>
<g font-family="Liberation Sans" font-size="10.8" text-anchor="middle" fill="#fff" stroke="#fff" stroke-width="4.2" stroke-linejoin="round">
<text x="93" y="27.8">$51</text>
<text x="122" y="40.8">$39</text>
<text x="114" y="58.8">$47</text>
<text x="240" y="26.8">$53</text>
<text x="234" y="44.8">$53</text>
<text x="226" y="61.8">$36</text>
<text x="299" y="32.8">$64</text>
<text x="65" y="101.8">$49</text>
<text x="93" y="123.8">$59</text>
<text x="121" y="144.8">$47</text>
<text x="210" y="94.8">$44</text>
<text x="201" y="118.8">$66</text>
<text x="257" y="111.8">$60</text>
<text x="301" y="95.8">$69</text>
<text x="330" y="96.8">$89</text>
<text x="330" y="126.8">$67</text>
<text x="302" y="146.8">$55</text>
<text x="338" y="153.8">$144</text>
<text x="173" y="158.8">$31</text>
<text x="239" y="167.8">$24</text>
<text x="181" y="187.8">$71</text>
<text x="343" y="198.8">$75</text>
<text x="92" y="208.8">$54</text>
<text x="302" y="215.8">$59</text>
<text x="187" y="221.8">$44</text>
<text x="236" y="222.8">$47</text>
<text x="178" y="247.8">$30</text>
<text x="205" y="254.8">$47</text>
<text x="276" y="249.8">$44</text>
<text x="300" y="259.8">$78</text>
<text x="331" y="273.8">$70</text>
<text x="203" y="274.8">$60</text>
<text x="89" y="261.8">$51</text>
<text x="119" y="293.8">$34</text>
<text x="273" y="294.8">$78</text>
<text x="316" y="295.8">$42</text>
<text x="339" y="301.8">$56</text>
<text x="169" y="319.8">$65</text>
<text x="206" y="319.8">$41</text>
<text x="314" y="323.8">$99</text>
<text x="377" y="328.8">$74</text>
<text x="353" y="335.8">$50</text>
<text x="372" y="355.8">$122</text>
<text x="282" y="365.8">$60</text>
<text x="11" y="367.8">$69</text>
<text x="66" y="428.8">$97</text>
<text x="142" y="428.8">$48</text>
<text x="176" y="426.8">$56</text>
<text x="333" y="392.8">$71</text>
<text x="319" y="436.8">$97</text>
<text x="364" y="452.8">$62</text>
<text x="391" y="459.8">$43</text>
<text x="281" y="458.8">$53</text>
<text x="244" y="487.8">$55</text>
<text x="344" y="507.8">$57</text>
<text x="321" y="516.8">$55</text>
<text x="363" y="526.8">$59</text>
<text x="211" y="533.8">$45</text>
<text x="242" y="563.8">$50</text>
<text x="397" y="531.8">$45</text>
<text x="72" y="635.8">$53</text>
<text x="221" y="689.8">$66</text>
<text x="274" y="704.8">$52</text>
<text x="49" y="707.8">$72</text>
<text x="11" y="727.8">$88</text>
<text x="178" y="753.8">$60</text>
<text x="325" y="744.8">$68</text>
<text x="429" y="650.8">$66</text>
<text x="457" y="701.8">$44</text>
<text x="526" y="697.8">$50</text>
<text x="485" y="722.8">$77</text>
<text x="441" y="741.8">$62</text>
</g>
<g font-family="Liberation Sans" font-size="10.8" text-anchor="middle" fill="#3a3a3a" stroke="#3a3a3a" stroke-width="0.3">
<text x="93" y="27.8">$51</text>
<text x="122" y="40.8">$39</text>
<text x="114" y="58.8">$47</text>
<text x="240" y="26.8">$53</text>
<text x="234" y="44.8">$53</text>
<text x="226" y="61.8">$36</text>
<text x="299" y="32.8">$64</text>
<text x="65" y="101.8">$49</text>
<text x="93" y="123.8">$59</text>
<text x="121" y="144.8">$47</text>
<text x="210" y="94.8">$44</text>
<text x="201" y="118.8">$66</text>
<text x="257" y="111.8">$60</text>
<text x="301" y="95.8">$69</text>
<text x="330" y="96.8">$89</text>
<text x="330" y="126.8">$67</text>
<text x="302" y="146.8">$55</text>
<text x="338" y="153.8">$144</text>
<text x="173" y="158.8">$31</text>
<text x="239" y="167.8">$24</text>
<text x="181" y="187.8">$71</text>
<text x="343" y="198.8">$75</text>
<text x="92" y="208.8">$54</text>
<text x="302" y="215.8">$59</text>
<text x="187" y="221.8">$44</text>
<text x="236" y="222.8">$47</text>
<text x="178" y="247.8">$30</text>
<text x="205" y="254.8">$47</text>
<text x="276" y="249.8">$44</text>
<text x="300" y="259.8">$78</text>
<text x="331" y="273.8">$70</text>
<text x="203" y="274.8">$60</text>
<text x="89" y="261.8">$51</text>
<text x="119" y="293.8">$34</text>
<text x="273" y="294.8">$78</text>
<text x="316" y="295.8">$42</text>
<text x="339" y="301.8">$56</text>
<text x="169" y="319.8">$65</text>
<text x="206" y="319.8">$41</text>
<text x="314" y="323.8">$99</text>
<text x="377" y="328.8">$74</text>
<text x="353" y="335.8">$50</text>
<text x="372" y="355.8">$122</text>
<text x="282" y="365.8">$60</text>
<text x="11" y="367.8">$69</text>
<text x="66" y="428.8">$97</text>
<text x="142" y="428.8">$48</text>
<text x="176" y="426.8">$56</text>
<text x="333" y="392.8">$71</text>
<text x="319" y="436.8">$97</text>
<text x="364" y="452.8">$62</text>
<text x="391" y="459.8">$43</text>
<text x="281" y="458.8">$53</text>
<text x="244" y="487.8">$55</text>
<text x="344" y="507.8">$57</text>
<text x="321" y="516.8">$55</text>
<text x="363" y="526.8">$59</text>
<text x="211" y="533.8">$45</text>
<text x="242" y="563.8">$50</text>
<text x="397" y="531.8">$45</text>
<text x="72" y="635.8">$53</text>
<text x="221" y="689.8">$66</text>
<text x="274" y="704.8">$52</text>
<text x="49" y="707.8">$72</text>
<text x="11" y="727.8">$88</text>
<text x="178" y="753.8">$60</text>
<text x="325" y="744.8">$68</text>
<text x="429" y="650.8">$66</text>
<text x="457" y="701.8">$44</text>
<text x="526" y="697.8">$50</text>
<text x="485" y="722.8">$77</text>
<text x="441" y="741.8">$62</text>
</g>
<g font-family="Liberation Sans" fill="#555" stroke="#fff" stroke-width="2.5" paint-order="stroke" stroke-linejoin="round">
<text x="33" y="25" font-size="15" text-anchor="start">Niles</text>
<text x="195" y="16" font-size="15" text-anchor="middle">Skokie</text>
<text x="-4" y="69" font-size="15" text-anchor="start">Ridge</text>
<text x="-4" y="188" font-size="15" text-anchor="start">Norridge</text>
<text x="0" y="294" font-size="14" text-anchor="start">Elmwood Park</text>
<text x="63" y="375" font-size="15" text-anchor="start">Oak Park</text>
<text x="0" y="397" font-size="14" text-anchor="start">ood</text>
<text x="60" y="467" font-size="15" text-anchor="start">Berwyn</text>
<text x="136" y="479" font-size="15" text-anchor="start">Cicero</text>
<text x="0" y="535" font-size="14" text-anchor="start">eld</text>
<text x="10" y="564" font-size="15" text-anchor="start">Lyons</text>
<text x="103" y="736" font-size="15" text-anchor="start">Burbank</text>
<text x="0" y="345" font-size="14" text-anchor="start">rk</text>
</g>
<circle cx="379" cy="389" r="4.8" fill="#fff" stroke="#8a7ae0" stroke-width="1.4"/>
<text x="357.5" y="401.5" font-family="Liberation Sans" font-size="21" fill="#222" stroke="#fff" stroke-width="3.5" paint-order="stroke" stroke-linejoin="round">Chicago</text>
<text x="31" y="146" font-family="Liberation Sans" font-size="11.5" fill="#8a8a82" transform="rotate(3 31 146)">Kennedy Expy</text>
<text x="162" y="651.6" font-family="Liberation Sans" font-size="12" fill="#9a8890" text-anchor="middle">Chicago Midway</text>
<text x="162" y="665.3" font-family="Liberation Sans" font-size="12" fill="#9a8890" text-anchor="middle">International Airport</text>
<text x="419" y="628" font-family="Liberation Sans" font-size="9" font-style="italic" fill="#8a6a78" text-anchor="middle" letter-spacing="0.8">BYNUM ISLAND</text>
<text x="1034" y="559.5" font-family="Liberation Sans" font-size="12.3" fill="#7a76d0" stroke="#c4def6" stroke-width="1.4" paint-order="stroke" transform="rotate(-64.5 1034 559.5)">Lake Michigan</text>
<circle cx="380" cy="32.4" r="4.8" fill="#fff" stroke="#5b5be6" stroke-width="1.6"/>
<circle cx="736.6" cy="389.3" r="4.8" fill="#fff" stroke="#5b5be6" stroke-width="1.6"/>
<circle cx="380" cy="746" r="4.8" fill="#fff" stroke="#5b5be6" stroke-width="1.6"/>
</svg>
<div style="position:absolute;left:0;top:3px;width:1px;height:757px;background:#c8c8c8"></div>
<div style="position:absolute;left:772px;top:14px;width:245px;height:455.5px;background:#fff;border-radius:5px;box-shadow:0 0 2px rgba(0,0,0,.35);"></div>
<div class="t" style="left:782.50px;top:29.54px;font-size:12px;line-height:12px;color:#555;">Set Radius: (miles)</div>
<div style="position:absolute;left:975px;top:26px;width:31.5px;height:17px;background:#4a8ee8;border-radius:9px;"></div>
<div style="position:absolute;left:990px;top:27px;width:15px;height:15px;background:#fff;border-radius:50%;box-shadow:0 0 1px rgba(0,0,0,.4);"></div>
<div style="position:absolute;left:962px;top:52px;width:44.5px;height:32px;background:#dedede;border-radius:3px;"></div>
<div class="t" style="left:801.00px;width:0;text-align:center;top:62.54px;font-size:12px;line-height:12px;color:#555;"><span style="position:absolute;left:50%;transform:translateX(-50%)">1m</span></div>
<div class="t" style="left:836.50px;width:0;text-align:center;top:62.54px;font-size:12px;line-height:12px;color:#555;"><span style="position:absolute;left:50%;transform:translateX(-50%)">2m</span></div>
<div class="t" style="left:872.70px;width:0;text-align:center;top:62.54px;font-size:12px;line-height:12px;color:#555;"><span style="position:absolute;left:50%;transform:translateX(-50%)">3m</span></div>
<div class="t" style="left:909.00px;width:0;text-align:center;top:62.54px;font-size:12px;line-height:12px;color:#555;"><span style="position:absolute;left:50%;transform:translateX(-50%)">4m</span></div>
<div class="t" style="left:944.70px;width:0;text-align:center;top:62.54px;font-size:12px;line-height:12px;color:#555;"><span style="position:absolute;left:50%;transform:translateX(-50%)">5m</span></div>
<div class="t" style="left:984.70px;width:0;text-align:center;top:62.54px;font-size:12px;line-height:12px;color:#3a3a3a;"><span style="position:absolute;left:50%;transform:translateX(-50%)">10m</span></div>
<div class="t" style="left:782.50px;top:95.14px;font-size:12px;line-height:12px;color:#9a9a9a;">Currently: 16090m, 10.00 miles.</div>
<div style="position:absolute;left:782.5px;top:127.5px;width:224px;height:0;border-top:1px dotted #c8c8c8"></div>
<div class="t" style="left:782.50px;top:136.64px;font-size:12px;line-height:12px;color:#555;">Self Storage</div>
<div style="position:absolute;left:792.3px;top:157.70px;width:12px;height:12px;background:#3478ec;border-radius:2px"><svg width="12" height="12" viewBox="0 0 12 12" style="position:absolute;left:0;top:0"><path d="M2.5 6.1L4.9 8.6L9.7 3.3" fill="none" stroke="#fff" stroke-width="2"/></svg></div>
<div class="t" style="left:812.70px;top:157.84px;font-size:12px;line-height:12px;color:#5e5e5e;">2018</div>
<div style="position:absolute;left:849.5px;top:160.2px;width:8px;height:7px;background:#2e7a22;box-shadow:0 0 0 1px rgba(0,0,0,.3);"></div>
<div class="t" style="right:547.60px;top:158.83px;font-size:10px;line-height:10px;color:#5a84dc;">only</div>
<div style="position:absolute;left:792.3px;top:177.96px;width:12px;height:12px;background:#3478ec;border-radius:2px"><svg width="12" height="12" viewBox="0 0 12 12" style="position:absolute;left:0;top:0"><path d="M2.5 6.1L4.9 8.6L9.7 3.3" fill="none" stroke="#fff" stroke-width="2"/></svg></div>
<div class="t" style="left:812.70px;top:178.10px;font-size:12px;line-height:12px;color:#5e5e5e;">2019</div>
<div style="position:absolute;left:849.5px;top:180.46px;width:8px;height:7px;background:#f4f040;box-shadow:0 0 0 1px rgba(0,0,0,.3);"></div>
<div class="t" style="right:547.60px;top:179.09px;font-size:10px;line-height:10px;color:#5a84dc;">only</div>
<div style="position:absolute;left:792.3px;top:198.22px;width:12px;height:12px;background:#3478ec;border-radius:2px"><svg width="12" height="12" viewBox="0 0 12 12" style="position:absolute;left:0;top:0"><path d="M2.5 6.1L4.9 8.6L9.7 3.3" fill="none" stroke="#fff" stroke-width="2"/></svg></div>
<div class="t" style="left:812.70px;top:198.36px;font-size:12px;line-height:12px;color:#5e5e5e;">2020</div>
<div style="position:absolute;left:853px;top:200.72px;width:8.5px;height:7px;background:#eaa83c;box-shadow:0 0 0 1px rgba(0,0,0,.3);"></div>
<div class="t" style="right:547.60px;top:199.35px;font-size:10px;line-height:10px;color:#5a84dc;">only</div>
<div style="position:absolute;left:792.3px;top:218.48px;width:12px;height:12px;background:#3478ec;border-radius:2px"><svg width="12" height="12" viewBox="0 0 12 12" style="position:absolute;left:0;top:0"><path d="M2.5 6.1L4.9 8.6L9.7 3.3" fill="none" stroke="#fff" stroke-width="2"/></svg></div>
<div class="t" style="left:812.70px;top:218.62px;font-size:12px;line-height:12px;color:#5e5e5e;">2021</div>
<div style="position:absolute;left:853px;top:220.98px;width:8.5px;height:7px;background:#90e090;box-shadow:0 0 0 1px rgba(0,0,0,.3);"></div>
<div class="t" style="right:547.60px;top:219.61px;font-size:10px;line-height:10px;color:#5a84dc;">only</div>
<div style="position:absolute;left:792.3px;top:238.74px;width:12px;height:12px;background:#3478ec;border-radius:2px"><svg width="12" height="12" viewBox="0 0 12 12" style="position:absolute;left:0;top:0"><path d="M2.5 6.1L4.9 8.6L9.7 3.3" fill="none" stroke="#fff" stroke-width="2"/></svg></div>
<div class="t" style="left:812.70px;top:238.88px;font-size:12px;line-height:12px;color:#5e5e5e;">Supply</div>
<div style="position:absolute;left:865px;top:241.24px;width:7px;height:7px;background:#e4322a;box-shadow:0 0 0 1px rgba(0,0,0,.3);"></div>
<div class="t" style="right:547.60px;top:239.88px;font-size:10px;line-height:10px;color:#5a84dc;">only</div>
<div style="position:absolute;left:792.3px;top:259.00px;width:12px;height:12px;background:#3478ec;border-radius:2px"><svg width="12" height="12" viewBox="0 0 12 12" style="position:absolute;left:0;top:0"><path d="M2.5 6.1L4.9 8.6L9.7 3.3" fill="none" stroke="#fff" stroke-width="2"/></svg></div>
<div class="t" style="left:812.70px;top:259.14px;font-size:12px;line-height:12px;color:#5e5e5e;">Planning/Permitted</div>
<div style="position:absolute;left:930.6px;top:261.5px;width:7.5px;height:7px;background:#4a8ff0;box-shadow:0 0 0 1px rgba(0,0,0,.3);"></div>
<div class="t" style="right:547.60px;top:260.14px;font-size:10px;line-height:10px;color:#5a84dc;">only</div>
<div style="position:absolute;left:792.3px;top:279.26px;width:12px;height:12px;background:#3478ec;border-radius:2px"><svg width="12" height="12" viewBox="0 0 12 12" style="position:absolute;left:0;top:0"><path d="M2.5 6.1L4.9 8.6L9.7 3.3" fill="none" stroke="#fff" stroke-width="2"/></svg></div>
<div class="t" style="left:812.70px;top:279.40px;font-size:12px;line-height:12px;color:#5e5e5e;">Under Construction</div>
<div style="position:absolute;left:933px;top:281.76px;width:7px;height:7px;background:#0a10e0;box-shadow:0 0 0 1px rgba(0,0,0,.3);"></div>
<div class="t" style="right:547.60px;top:280.40px;font-size:10px;line-height:10px;color:#5a84dc;">only</div>
<div style="position:absolute;left:792.3px;top:299.52px;width:12px;height:12px;background:#3478ec;border-radius:2px"><svg width="12" height="12" viewBox="0 0 12 12" style="position:absolute;left:0;top:0"><path d="M2.5 6.1L4.9 8.6L9.7 3.3" fill="none" stroke="#fff" stroke-width="2"/></svg></div>
<div class="t" style="left:812.70px;top:299.66px;font-size:12px;line-height:12px;color:#5e5e5e;">Expansion</div>
<div style="position:absolute;left:884px;top:302.02px;width:7.5px;height:7px;background:#5cc0c8;box-shadow:0 0 0 1px rgba(0,0,0,.3);"></div>
<div class="t" style="right:547.60px;top:300.66px;font-size:10px;line-height:10px;color:#5a84dc;">only</div>
<div style="position:absolute;left:792.3px;top:319.78px;width:12px;height:12px;background:#3478ec;border-radius:2px"><svg width="12" height="12" viewBox="0 0 12 12" style="position:absolute;left:0;top:0"><path d="M2.5 6.1L4.9 8.6L9.7 3.3" fill="none" stroke="#fff" stroke-width="2"/></svg></div>
<div class="t" style="left:812.70px;top:319.92px;font-size:12px;line-height:12px;color:#5e5e5e;">Non-active Pipeline</div>
<div style="position:absolute;left:931.6px;top:322.03px;width:9px;height:7.5px;background:#cfcfcf;box-shadow:0 0 0 1px rgba(0,0,0,.3);"></div>
<div class="t" style="right:547.60px;top:320.92px;font-size:10px;line-height:10px;color:#5a84dc;">only</div>
<div class="t" style="left:782.50px;top:344.64px;font-size:12px;line-height:12px;color:#555;">Highlights</div>
<div style="position:absolute;left:792.3px;top:366.60px;width:10px;height:10px;border:1px solid #8a8a8a;border-radius:2px;background:#fff"></div>
<div class="t" style="left:812.70px;top:366.74px;font-size:12px;line-height:12px;color:#5e5e5e;">Radius Listings</div>
<div class="t" style="right:547.60px;top:367.74px;font-size:10px;line-height:10px;color:#5a84dc;">only</div>
<div style="position:absolute;left:792.3px;top:386.80px;width:10px;height:10px;border:1px solid #8a8a8a;border-radius:2px;background:#fff"></div>
<div class="t" style="left:812.70px;top:386.94px;font-size:12px;line-height:12px;color:#5e5e5e;">Maturing Loans</div>
<div class="t" style="right:547.60px;top:387.94px;font-size:10px;line-height:10px;color:#5a84dc;">only</div>
<div style="position:absolute;left:792.3px;top:407.20px;width:10px;height:10px;border:1px solid #8a8a8a;border-radius:2px;background:#fff"></div>
<div class="t" style="left:812.70px;top:407.34px;font-size:12px;line-height:12px;color:#5e5e5e;">REIT Facilities</div>
<div class="t" style="right:547.60px;top:408.34px;font-size:10px;line-height:10px;color:#5a84dc;">only</div>
<div style="position:absolute;left:903.6px;top:367.4px;width:10.6px;height:10.6px;border-radius:50%;background:#1212d8;box-shadow:0 1px 1.5px rgba(0,0,0,.4)"></div>
<div style="position:absolute;left:907.4px;top:371.2px;width:3px;height:3px;border-radius:50%;background:#fff"></div>
<div style="position:absolute;left:911.6px;top:388.8px;width:7.4px;height:7.7px;background:#6a186a;"></div>
<div style="position:absolute;left:903px;top:409.2px;width:8px;height:8px;background:#e040e8;"></div>
<div class="t" style="right:547.60px;top:443.14px;font-size:10px;line-height:10px;color:#5a84dc;">hide</div>
<div style="position:absolute;left:986.5px;top:480px;width:30.5px;height:61px;background:#fff;border-radius:4px;box-shadow:0 0 2px rgba(0,0,0,.3);"></div>
<div style="position:absolute;left:986.5px;top:510.2px;width:30.5px;height:0.8px;background:#e2e2e2;"></div>
<svg style="position:absolute;left:993px;top:486px" width="17" height="17" viewBox="0 0 17 17"><path d="M4 4H13V13H4Z" fill="none" stroke="#111" stroke-width="1.6"/><circle cx="4" cy="4" r="1.9" fill="#111"/><circle cx="13" cy="4" r="1.9" fill="#111"/><circle cx="4" cy="13" r="1.9" fill="#111"/><circle cx="13" cy="13" r="1.9" fill="#111"/></svg>
<svg style="position:absolute;left:993px;top:516px" width="17" height="20" viewBox="0 0 17 20"><rect x="6.5" y="2.3" width="4" height="2.4" rx="0.8" fill="#111"/><rect x="3" y="4.3" width="11" height="2.4" rx="1" fill="#111"/><path d="M3.8 7.8H13.2V14.8Q13.2 17.6 10.4 17.6H6.6Q3.8 17.6 3.8 14.8Z" fill="#111"/><path d="M6.6 9.2V15M10.4 9.2V15" stroke="#fff" stroke-width="1.3"/></svg>
<div style="position:absolute;left:1040px;top:3px;width:17px;height:55px;background:#4a6179;border-bottom-left-radius:4px;"></div>
<div style="position:absolute;left:1047.1px;top:23.7px;width:3.2px;height:3.2px;background:#fff;border-radius:50%;"></div>
<div style="position:absolute;left:1047.1px;top:28.2px;width:3.2px;height:3.2px;background:#fff;border-radius:50%;"></div>
<div style="position:absolute;left:1047.1px;top:32.6px;width:3.2px;height:3.2px;background:#fff;border-radius:50%;"></div>
<div style="position:absolute;left:1051px;top:3px;width:6px;height:757px;background:linear-gradient(to right, rgba(40,60,90,0), rgba(40,60,90,.10));"></div>
<div style="position:absolute;left:1057px;top:3px;width:497px;height:757px;background:#f9f9f9;"></div>
<svg style="position:absolute;left:1100px;top:8px" width="24" height="43" viewBox="0 0 24 43"><path d="M12 42C10 30 1.5 22 1.5 12.5A10.5 10.5 0 0 1 22.5 12.5C22.5 22 14 30 12 42Z" fill="#e8604c" stroke="#c04030" stroke-width="0.8"/><circle cx="12" cy="12.5" r="3.2" fill="#5a1a14"/></svg>
<div class="t" style="left:1139.00px;top:11.43px;font-size:15.8px;line-height:15.8px;color:#505050;-webkit-text-stroke:0.3px #505050;">, Chicago, IL 60602, USA</div>
<div class="t" style="left:1139.00px;top:40.80px;font-size:12.4px;line-height:12.4px;color:#707070;">, Chicago, IL 60602, USA</div>
<div style="position:absolute;left:1072px;top:102.5px;width:479px;height:46.5px;background:#e4f1fb;border-top:1px solid #d6e6f2;box-sizing:border-box;"></div><div class="t" style="left:1085.00px;top:118.59px;font-size:12.3px;line-height:12.3px;color:#555;font-weight:bold;">Current Supply</div>
<div class="t" style="left:1085.00px;top:164.30px;font-size:13px;line-height:13px;color:#6a6a6a;">Facility Count:</div><div class="t" style="left:1244.00px;top:164.30px;font-size:13px;line-height:13px;color:#6a6a6a;">144</div>
<div class="t" style="left:1085.00px;top:200.70px;font-size:13px;line-height:13px;color:#6a6a6a;">Square Footage</div><div class="t" style="left:1244.00px;top:200.70px;font-size:13px;line-height:13px;color:#6a6a6a;">Rentable SF</div><div class="t" style="left:1351.00px;top:200.70px;font-size:13px;line-height:13px;color:#6a6a6a;">2021</div><div class="t" style="left:1457.50px;top:200.70px;font-size:13px;line-height:13px;color:#6a6a6a;">2021 - 2026</div>
<div class="t" style="left:1351.00px;top:219.60px;font-size:13px;line-height:13px;color:#6a6a6a;">SF/Capita</div><div class="t" style="left:1457.50px;top:219.60px;font-size:13px;line-height:13px;color:#6a6a6a;">SF/Capita</div>
<div style="position:absolute;left:1072px;top:241px;width:479px;height:2px;background:#d8d8d8;"></div>
<div class="t" style="left:1085.00px;top:250.30px;font-size:13px;line-height:13px;color:#6a6a6a;">Climate Controlled</div><div class="t" style="left:1244.00px;top:250.30px;font-size:13px;line-height:13px;color:#6a6a6a;">7,846,847</div><div class="t" style="left:1351.00px;top:250.30px;font-size:13px;line-height:13px;color:#6a6a6a;">3.1</div><div class="t" style="left:1457.50px;top:250.30px;font-size:13px;line-height:13px;color:#6a6a6a;">3.1</div>
<div style="position:absolute;left:1072px;top:271.5px;width:479px;height:1px;background:#e2e4e8;"></div>
<div class="t" style="left:1085.00px;top:279.40px;font-size:13px;line-height:13px;color:#6a6a6a;">Non Climate</div><div class="t" style="left:1244.00px;top:279.40px;font-size:13px;line-height:13px;color:#6a6a6a;">1,369,878</div><div class="t" style="left:1351.00px;top:279.40px;font-size:13px;line-height:13px;color:#6a6a6a;">0.5</div><div class="t" style="left:1457.50px;top:279.40px;font-size:13px;line-height:13px;color:#6a6a6a;">0.5</div>
<div class="t" style="left:1085.00px;top:297.90px;font-size:13px;line-height:13px;color:#6a6a6a;">Controlled</div>
<div style="position:absolute;left:1072px;top:319.5px;width:479px;height:1px;background:#e2e4e8;"></div>
<div class="t" style="left:1085.00px;top:327.89px;font-size:12.3px;line-height:12.3px;color:#5a5a5a;font-weight:bold;">Total Square Footage</div><div class="t" style="left:1244.00px;top:327.89px;font-size:12.3px;line-height:12.3px;color:#5a5a5a;font-weight:bold;">9,216,725</div><div class="t" style="left:1351.00px;top:327.89px;font-size:12.3px;line-height:12.3px;color:#5a5a5a;font-weight:bold;">3.6</div><div class="t" style="left:1457.50px;top:327.89px;font-size:12.3px;line-height:12.3px;color:#5a5a5a;font-weight:bold;">3.6</div>
<div class="t" style="left:1085.00px;top:387.00px;font-size:13px;line-height:13px;color:#6a6a6a;">Recent Deliveries</div><div class="t" style="left:1244.00px;top:387.00px;font-size:13px;line-height:13px;color:#6a6a6a;">2019</div><div class="t" style="left:1351.00px;top:387.00px;font-size:13px;line-height:13px;color:#6a6a6a;">2020</div><div class="t" style="left:1457.50px;top:387.00px;font-size:13px;line-height:13px;color:#6a6a6a;">2021</div>
<div style="position:absolute;left:1072px;top:409px;width:479px;height:2px;background:#d8d8d8;"></div>
<div class="t" style="left:1085.00px;top:418.00px;font-size:13px;line-height:13px;color:#6a6a6a;">Facilities</div><div class="t" style="left:1244.00px;top:418.00px;font-size:13px;line-height:13px;color:#6a6a6a;">3</div><div class="t" style="left:1351.00px;top:418.00px;font-size:13px;line-height:13px;color:#6a6a6a;">3</div><div class="t" style="left:1457.50px;top:418.00px;font-size:13px;line-height:13px;color:#6a6a6a;">-</div>
<div style="position:absolute;left:1072px;top:439.1px;width:479px;height:1px;background:#e2e4e8;"></div>
<div class="t" style="left:1085.00px;top:447.00px;font-size:13px;line-height:13px;color:#6a6a6a;">Rentable SF</div><div class="t" style="left:1244.00px;top:447.00px;font-size:13px;line-height:13px;color:#6a6a6a;">246,223</div><div class="t" style="left:1351.00px;top:447.00px;font-size:13px;line-height:13px;color:#6a6a6a;">254,100</div>
<div style="position:absolute;left:1072px;top:468.2px;width:479px;height:1px;background:#e2e4e8;"></div>
<div class="t" style="left:1085.00px;top:475.50px;font-size:13px;line-height:13px;color:#6a6a6a;">% of trade area</div><div class="t" style="left:1244.00px;top:475.50px;font-size:13px;line-height:13px;color:#6a6a6a;">3%</div><div class="t" style="left:1351.00px;top:475.50px;font-size:13px;line-height:13px;color:#6a6a6a;">3%</div>
<div style="position:absolute;left:1072px;top:513px;width:479px;height:46px;background:#e4f1fb;border-top:1px solid #d6e6f2;box-sizing:border-box;"></div><div class="t" style="left:1085.00px;top:529.29px;font-size:12.3px;line-height:12.3px;color:#555;font-weight:bold;">Supply Adjusted for Active Pipeline</div>
<div class="t" style="left:1085.00px;top:575.60px;font-size:13px;line-height:13px;color:#6a6a6a;">Facility Count:</div><div class="t" style="left:1244.00px;top:575.60px;font-size:13px;line-height:13px;color:#6a6a6a;">152</div>
<div class="t" style="left:1085.00px;top:610.40px;font-size:13px;line-height:13px;color:#6a6a6a;">Square Footage</div><div class="t" style="left:1244.00px;top:610.40px;font-size:13px;line-height:13px;color:#6a6a6a;">Rentable SF</div><div class="t" style="left:1351.00px;top:610.40px;font-size:13px;line-height:13px;color:#6a6a6a;">2021</div><div class="t" style="left:1457.50px;top:610.40px;font-size:13px;line-height:13px;color:#6a6a6a;">2021 - 2026</div>
<div class="t" style="left:1351.00px;top:631.00px;font-size:13px;line-height:13px;color:#6a6a6a;">SF/Capita</div><div class="t" style="left:1457.50px;top:631.00px;font-size:13px;line-height:13px;color:#6a6a6a;">SF/Capita</div>
<div style="position:absolute;left:1072px;top:651.7px;width:479px;height:2px;background:#d8d8d8;"></div>
<div class="t" style="left:1085.00px;top:660.20px;font-size:13px;line-height:13px;color:#6a6a6a;">Current Supply</div><div class="t" style="left:1244.00px;top:660.20px;font-size:13px;line-height:13px;color:#6a6a6a;">9,216,725</div><div class="t" style="left:1351.00px;top:660.20px;font-size:13px;line-height:13px;color:#6a6a6a;">3.6</div><div class="t" style="left:1457.50px;top:660.20px;font-size:13px;line-height:13px;color:#6a6a6a;">3.6</div>
<div style="position:absolute;left:1072px;top:681.3px;width:479px;height:1px;background:#e2e4e8;"></div>
<div class="t" style="left:1085.00px;top:689.30px;font-size:13px;line-height:13px;color:#6a6a6a;">Active Pipeline</div><div class="t" style="left:1244.00px;top:689.30px;font-size:13px;line-height:13px;color:#6a6a6a;">558,453</div><div class="t" style="left:1351.00px;top:689.30px;font-size:13px;line-height:13px;color:#6a6a6a;">0.2</div><div class="t" style="left:1457.50px;top:689.30px;font-size:13px;line-height:13px;color:#6a6a6a;">0.2</div>
<div style="position:absolute;left:1072px;top:710.5px;width:479px;height:1px;background:#e2e4e8;"></div>
<div class="t" style="left:1085.00px;top:719.39px;font-size:12.3px;line-height:12.3px;color:#5a5a5a;font-weight:bold;">Total Square Footage</div><div class="t" style="left:1244.00px;top:719.39px;font-size:12.3px;line-height:12.3px;color:#5a5a5a;font-weight:bold;">9,775,178</div><div class="t" style="left:1351.00px;top:719.39px;font-size:12.3px;line-height:12.3px;color:#5a5a5a;font-weight:bold;">3.9</div><div class="t" style="left:1457.50px;top:719.39px;font-size:12.3px;line-height:12.3px;color:#5a5a5a;font-weight:bold;">3.9</div>
<div style="position:absolute;left:1072px;top:756.4px;width:479px;height:3.6px;background:#e4f1fb;border-top:1px solid #d6e6f2;box-sizing:border-box;"></div>
<div style="position:absolute;left:1504.2px;top:738.7px;width:61.6px;height:61.6px;background:#2c3e50;border-radius:50%;"></div>
<div style="position:absolute;left:1520.7px;top:752px;width:28px;height:20px;background:#fff;border-radius:4px;"></div>
</body></html>
